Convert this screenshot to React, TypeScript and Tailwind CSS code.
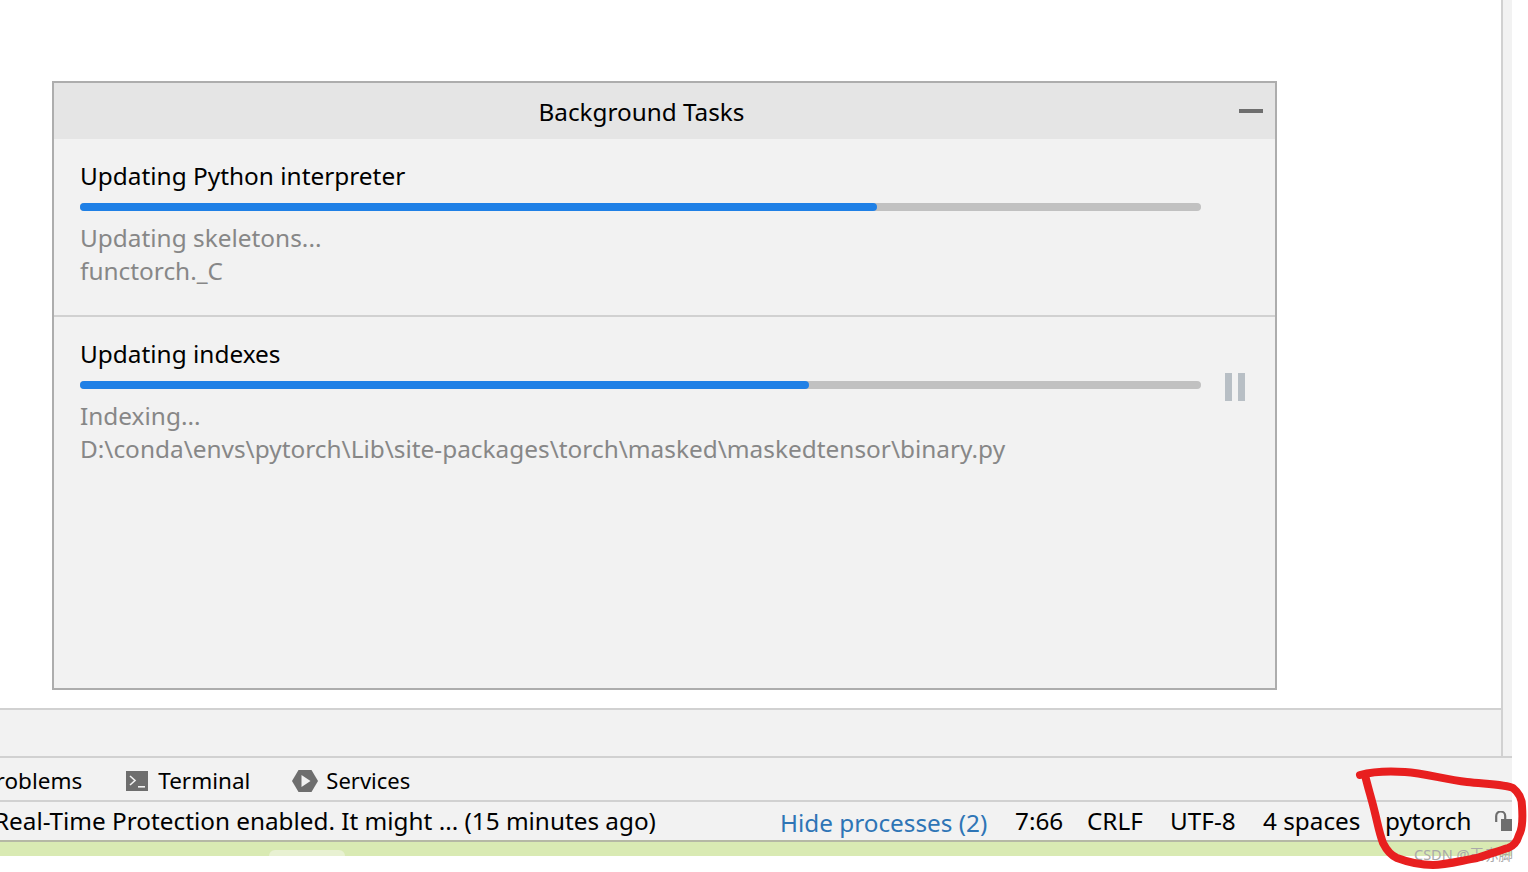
const font = { fontFamily: '"Noto Sans", sans-serif' };

function TerminalIcon() {
  return (
    <svg width="22" height="20" viewBox="0 0 22 20" className="shrink-0">
      <rect width="22" height="20" fill="#6e6e6e" />
      <path d="M4 5l5 4.5L4 14" fill="none" stroke="#f2f2f2" strokeWidth="1.6" />
      <rect x="12" y="15" width="7" height="1.6" fill="#f2f2f2" />
    </svg>
  );
}

function ServicesIcon() {
  return (
    <svg width="26" height="22" viewBox="0 0 26 22" className="shrink-0">
      <path d="M6.5 0h13L26 11l-6.5 11h-13L0 11z" fill="#6e6e6e" />
      <path d="M9.5 5l9 6-9 6z" fill="#f2f2f2" />
    </svg>
  );
}

function LockIcon() {
  return (
    <svg width="17" height="20" viewBox="0 0 17 20" className="shrink-0">
      <path d="M1.2 11V5a4.5 4.5 0 0 1 9 0v4" fill="none" stroke="#6e6e6e" strokeWidth="2.2" />
      <rect x="6" y="8" width="11" height="12" fill="#6e6e6e" />
    </svg>
  );
}

function TaskRow({ title, pct, lines, paused }: { title: string; pct: number; lines: string[]; paused?: boolean }) {
  return (
    <div className="pl-[26px] pr-[30px]">
      <div className="text-[24.4px] leading-[32px] text-black">{title}</div>
      <div className="mt-[11px] flex h-2 items-center">
        <div className="h-2 w-[1121px] rounded bg-[#c1c1c1]">
          <div className="h-2 rounded bg-[#1f80e6]" style={{ width: pct + '%' }} />
        </div>
        {paused && (
          <div className="ml-6 mt-1 flex gap-[6px]">
            <div className="h-7 w-[7px] bg-[#b8bfc5]" />
            <div className="h-7 w-[7px] bg-[#b8bfc5]" />
          </div>
        )}
      </div>
      <div className="mt-[11px] text-[24.4px] leading-[32.5px] text-[#878787]">
        {lines.map((l) => (
          <div key={l}>{l}</div>
        ))}
      </div>
    </div>
  );
}

export default function App() {
  return (
    <div className="relative h-[872px] w-[1528px] overflow-hidden bg-white" style={font}>
      <div className="flex h-[856px] w-[1512px] flex-col">
        <div className="flex h-[756px] shrink-0">
          <div className="flex min-w-0 flex-1 flex-col">
            <div className="h-[708px] shrink-0 pl-[52px] pt-[81px]">
              <div className="h-[609px] w-[1225px] border-2 border-[#adadad] bg-[#f2f2f2]">
                <div className="relative flex h-[56px] items-center justify-center bg-[#e5e5e5] pr-[46px] pt-[2px] text-[24.3px] text-black">
                  Background Tasks
                  <div className="absolute right-[12px] top-[26px] h-1 w-6 bg-[#6e6e6e]" />
                </div>
                <div className="h-[178px] border-b-2 border-[#d1d1d1] pt-[21px]">
                  <TaskRow title="Updating Python interpreter" pct={71.1} lines={['Updating skeletons...', 'functorch._C']} />
                </div>
                <div className="pt-[21px]">
                  <TaskRow
                    title="Updating indexes"
                    pct={65}
                    paused
                    lines={['Indexing...', 'D:\\conda\\envs\\pytorch\\Lib\\site-packages\\torch\\masked\\maskedtensor\\binary.py']}
                  />
                </div>
              </div>
            </div>
            <div className="flex-1 border-t-2 border-[#d1d1d1] bg-[#f2f2f2]" />
          </div>
          <div className="w-[11px] border-l-2 border-[#d1d1d1] bg-[#f2f2f2]" />
        </div>
        <div className="flex h-[46px] shrink-0 items-center whitespace-nowrap border-y-2 border-[#d1d1d1] bg-[#f2f2f2] pt-[3px] text-[22.5px] text-black">
          <span className="-ml-[18px]">Problems</span>
          <div className="ml-[44px] flex items-center gap-[10px]">
            <TerminalIcon />
            <span>Terminal</span>
          </div>
          <div className="ml-[42px] flex items-center gap-[8px]">
            <ServicesIcon />
            <span className="text-[22px]">Services</span>
          </div>
        </div>
        <div className="flex h-[40px] shrink-0 items-center whitespace-nowrap border-b-2 border-[#b5b8a5] bg-[#f2f2f2] text-[24.3px] text-black">
          <span className="w-[780px] -ml-[6px] pr-0">Real-Time Protection enabled. It might ... (15 minutes ago)</span>
          <span className="ml-[6px] mt-[4px] w-[235px] text-[#2e75b6]">Hide processes (2)</span>
          <span className="w-[72px]">7:66</span>
          <span className="w-[83px]">CRLF</span>
          <span className="w-[93px]">UTF-8</span>
          <span className="w-[122px]">4 spaces</span>
          <span className="w-[110px]">pytorch</span>
          <LockIcon />
        </div>
        <div className="flex-1 bg-[#d9eab3] pl-[269px]">
          <div className="mt-[8px] h-[6px] w-[76px] rounded-t-md bg-[#e8f1d2]" />
        </div>
      </div>
      <span className="absolute left-[1414px] top-[844px] text-[14.5px] text-[#a9a9a9]" style={{ fontFamily: '"Noto Sans", "Noto Sans CJK SC", sans-serif' }}>
        CSDN @王赤脚
      </span>
      <svg className="absolute left-0 top-0" width="1528" height="872" viewBox="0 0 1528 872" fill="none">
        <path
          d="M1360 775 C1375 771 1390 771 1405 772 C1425 773 1445 780 1467 782 C1485 784 1505 784 1513 788 C1518 792 1522 798 1522 806 C1523 820 1522 830 1519 835 C1517 842 1514 846 1508 848 C1498 851 1490 854 1477 858 C1460 861 1445 865 1433 865 C1420 865 1405 861 1397 858 C1390 855 1386 849 1383 843 C1379 832 1378 825 1375 813 C1372 800 1368 788 1365 775"
          stroke="#e81f1f"
          strokeWidth="8"
          strokeLinecap="round"
          strokeLinejoin="round"
        />
      </svg>
    </div>
  );
}
